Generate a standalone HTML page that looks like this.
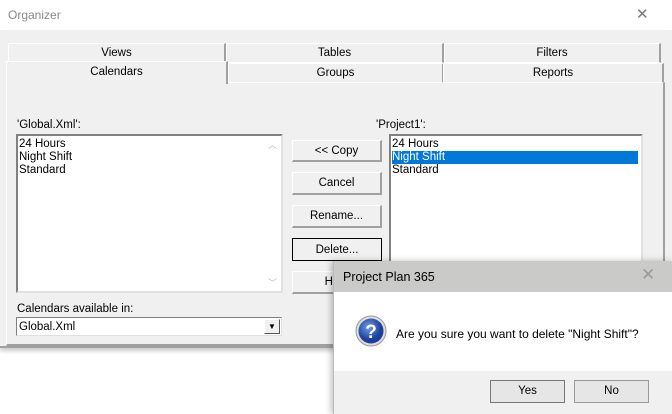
<!DOCTYPE html>
<html><head><style>
*{margin:0;padding:0;box-sizing:border-box}
body{width:672px;height:414px;position:relative;background:#fff;font-family:"Liberation Sans",sans-serif;font-size:11px;color:#000;overflow:hidden}
.a{position:absolute}
.tab{position:absolute;background:#f0f0f0;border:1px solid #fff;border-right:2px solid #a0a0a0;text-align:center;font-size:11.5px;line-height:19px}
.btn{position:absolute;background:#f0f0f0;border:1px solid #fff;border-right:2px solid #a0a0a0;border-bottom:2px solid #a0a0a0;text-align:center;font-size:11.5px;line-height:20px}
.lb{position:absolute;background:#fff;border:2px solid #808080;border-right-color:#e0e0e0;border-bottom-color:#e0e0e0;font-size:11.5px;line-height:13px}
</style></head><body>
<div class="a" style="left:8px;top:8px;color:#888;font-size:12px">Organizer</div>
<div class="a" style="left:636px;top:5px;color:#777;font-size:15px;font-weight:100">✕</div>
<div class="a" style="left:0;top:30px;width:672px;height:318px;background:#f0f0f0;border-bottom:2px solid #a0a0a0;box-shadow:0 3px 4px #ccc"></div>
<div class="tab" style="left:8px;top:43px;width:218px;height:20px">Views</div>
<div class="tab" style="left:226px;top:43px;width:218px;height:20px">Tables</div>
<div class="tab" style="left:444px;top:43px;width:217px;height:20px">Filters</div>
<div class="a" style="left:6px;top:82px;width:659px;height:264px;border:1px solid #fff;border-right:2px solid #a0a0a0;border-bottom:2px solid #a0a0a0"></div>
<div class="tab" style="left:228px;top:63px;width:216px;height:20px">Groups</div>
<div class="tab" style="left:443px;top:63px;width:221px;height:20px">Reports</div>
<div class="tab" style="left:6px;top:61px;width:222px;height:23px;border-bottom:none;line-height:21px">Calendars</div>
<div class="a" style="left:17px;top:119px;font-size:11.5px">'Global.Xml':</div>
<div class="lb" style="left:16px;top:134px;width:267px;height:159px;padding:2px 0 0 1px">24 Hours<br>Night Shift<br>Standard</div>
<div class="a" style="left:268px;top:138px;color:#bbb;font-size:9px">︿</div>
<div class="a" style="left:268px;top:276px;color:#bbb;font-size:9px">﹀</div>
<div class="a" style="left:17px;top:303px;font-size:11.5px">Calendars available in:</div>
<div class="lb" style="left:16px;top:317px;width:266px;height:19px;padding:3px 0 0 2px;border-width:1px">Global.Xml</div>
<div class="a" style="left:264px;top:319px;width:16px;height:15px;background:#f0f0f0;border:1px solid #fff;border-right-color:#555;border-bottom-color:#555;font-size:8px;text-align:center;line-height:14px">▼</div>
<div class="btn" style="left:292px;top:140px;width:90px;height:22px">&lt;&lt; Copy</div>
<div class="btn" style="left:292px;top:172px;width:90px;height:23px">Cancel</div>
<div class="btn" style="left:292px;top:205px;width:90px;height:23px">Rename...</div>
<div class="btn" style="left:292px;top:238px;width:90px;height:23px;border:1px solid #000;line-height:22px">Delete...</div>
<div class="btn" style="left:292px;top:271px;width:90px;height:23px">Help</div>
<div class="a" style="left:376px;top:119px;font-size:11.5px">'Project1':</div>
<div class="lb" style="left:389px;top:134px;width:254px;height:160px;padding:2px 0 0 1px">24 Hours<br><span style="display:block;background:#0078d7;color:#fff;width:246px">Night Shift</span>Standard</div>
<div class="a" style="left:333px;top:261px;width:339px;height:153px;background:#f0f0f0;box-shadow:-2px 0 6px rgba(0,0,0,.25);border-left:1px solid #bbb">
<div class="a" style="left:0;top:0;width:339px;height:31px;background:#cacbc8"></div>
<div class="a" style="left:9px;top:9px;font-size:12.5px">Project Plan 365</div>
<div class="a" style="left:307px;top:4px;color:#999;font-size:17px">✕</div>
<div class="a" style="left:0;top:31px;width:339px;height:79px;background:#fff"></div>
<svg class="a" style="left:21px;top:54px" width="32" height="32"><defs><radialGradient id="g" cx="40%" cy="35%"><stop offset="0" stop-color="#6f9fe0"/><stop offset="1" stop-color="#1c3f9c"/></radialGradient></defs><circle cx="16" cy="16" r="15" fill="#ddd" stroke="#999"/><circle cx="16" cy="16" r="12.5" fill="url(#g)"/><text x="16" y="23" text-anchor="middle" font-family="Liberation Sans" font-weight="bold" font-size="19" fill="#fff">?</text></svg>
<div class="a" style="left:62px;top:66px;font-size:12px">Are you sure you want to delete "Night Shift"?</div>
<div class="btn" style="left:156px;top:119px;width:75px;height:23px;border:1px solid #777;background:#e6e6e6">Yes</div>
<div class="btn" style="left:240px;top:119px;width:75px;height:23px;border:1px solid #999;background:#e6e6e6">No</div>
</div>
</body></html>
